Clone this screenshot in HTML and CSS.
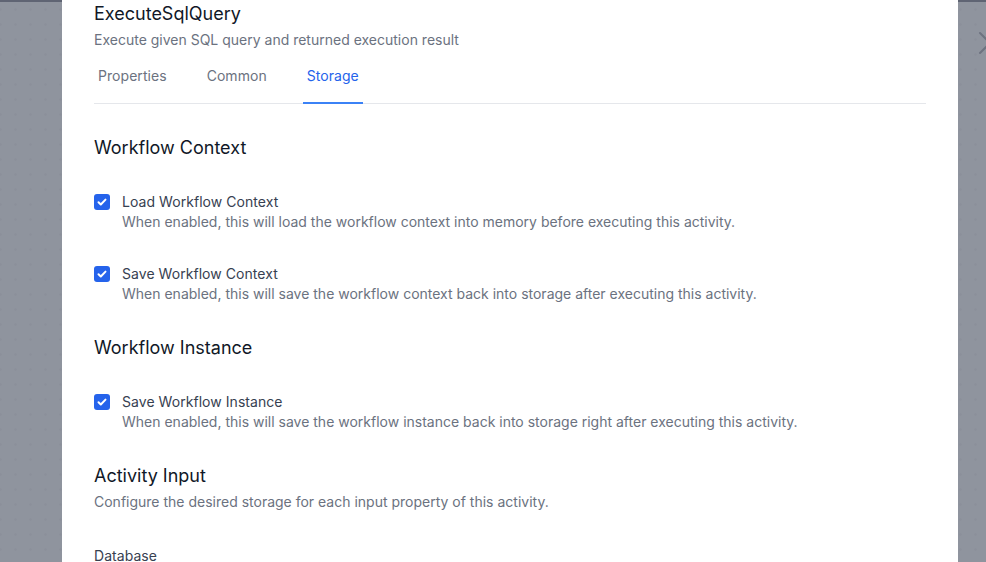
FILE: index.html
```html
<!DOCTYPE html>
<html lang="en">
<head>
    <meta charset="UTF-8">
    <meta name="viewport" content="width=device-width, initial-scale=1.0">
    <title>ExecuteSqlQuery - Storage</title>
    <link rel="stylesheet" href="styles.css">
</head>
<body>
    <div class="backdrop">
        <div class="toolbar-edge"></div>

        <div class="panel">
            <h2 class="panel-title">ExecuteSqlQuery</h2>
            <p class="panel-desc">Execute given SQL query and returned execution result</p>

            <nav class="tabs">
                <a href="#" class="tab">Properties</a>
                <a href="#" class="tab">Common</a>
                <a href="#" class="tab tab-active">Storage</a>
            </nav>

            <div class="content">
                <section class="section">
                    <h3 class="section-title">Workflow Context</h3>

                    <div class="option">
                        <span class="checkbox">
                            <svg viewBox="0 0 16 16" width="16" height="16"><path d="M4.5 8.2l2.3 2.3 4.7-4.9" fill="none" stroke="#fff" stroke-width="2" stroke-linecap="round" stroke-linejoin="round"/></svg>
                        </span>
                        <div class="option-text">
                            <div class="option-label">Load Workflow Context</div>
                            <div class="option-hint">When enabled, this will load the workflow context into memory before executing this activity.</div>
                        </div>
                    </div>

                    <div class="option">
                        <span class="checkbox">
                            <svg viewBox="0 0 16 16" width="16" height="16"><path d="M4.5 8.2l2.3 2.3 4.7-4.9" fill="none" stroke="#fff" stroke-width="2" stroke-linecap="round" stroke-linejoin="round"/></svg>
                        </span>
                        <div class="option-text">
                            <div class="option-label">Save Workflow Context</div>
                            <div class="option-hint">When enabled, this will save the workflow context back into storage after executing this activity.</div>
                        </div>
                    </div>
                </section>

                <section class="section">
                    <h3 class="section-title">Workflow Instance</h3>

                    <div class="option">
                        <span class="checkbox">
                            <svg viewBox="0 0 16 16" width="16" height="16"><path d="M4.5 8.2l2.3 2.3 4.7-4.9" fill="none" stroke="#fff" stroke-width="2" stroke-linecap="round" stroke-linejoin="round"/></svg>
                        </span>
                        <div class="option-text">
                            <div class="option-label">Save Workflow Instance</div>
                            <div class="option-hint">When enabled, this will save the workflow instance back into storage right after executing this activity.</div>
                        </div>
                    </div>
                </section>

                <section class="section">
                    <h3 class="section-title">Activity Input</h3>
                    <p class="section-desc">Configure the desired storage for each input property of this activity.</p>

                    <div class="field-label">Database</div>
                </section>
            </div>
        </div>

        <button class="close-btn" aria-label="Close">
            <svg viewBox="0 0 24 24" width="24" height="24"><path d="M2 2L22 22M2 22L22 2" fill="none" stroke="currentColor" stroke-width="2" stroke-linecap="round"/></svg>
        </button>
    </div>
</body>
</html>
```

FILE: styles.css
```css
html, body {
    margin: 0;
    padding: 0;
    height: 100%;
    overflow: hidden;
}
body {
    font-family: Inter, "Noto Sans", sans-serif;
    color: #111827;
}
.backdrop {
    position: relative;
    height: 100%;
    background-color: #8f949e;
    background-image: radial-gradient(circle, rgba(70, 76, 90, 0.05) 1px, transparent 1.6px);
    background-size: 15px 15px;
    background-position: -7px 2px;
}
.toolbar-edge {
    position: absolute;
    top: 0;
    left: 0;
    right: 0;
    height: 2px;
    background: #5f6473;
}
.panel {
    position: relative;
    margin-left: 62px;
    width: 896px;
    height: 100%;
    box-sizing: border-box;
    padding: 0 32px;
    background: #fff;
}
.panel-title {
    margin: 0;
    font-size: 18px;
    line-height: 28px;
    font-weight: 400;
    color: #111827;
}
.panel-desc {
    margin: 2px 0 0;
    font-size: 14px;
    line-height: 20px;
    color: #6b7280;
}
.tabs {
    display: flex;
    gap: 32px;
    border-bottom: 1px solid #e5e7eb;
}
.tab {
    padding: 16px 4px;
    margin-bottom: -1px;
    border-bottom: 2px solid transparent;
    font-size: 14px;
    line-height: 20px;
    font-weight: 400;
    letter-spacing: 0.05px;
    color: #6b7280;
    text-decoration: none;
}
.tab-active {
    border-bottom-color: #3b82f6;
    color: #2563eb;
}
.content {
    padding-top: 32px;
}
.section + .section {
    margin-top: 32px;
}
.section-title {
    margin: 0;
    font-size: 18px;
    line-height: 24px;
    font-weight: 400;
    color: #111827;
}
.section-desc {
    margin: 4px 0 0;
    font-size: 14px;
    line-height: 20px;
    color: #6b7280;
}
.option {
    display: flex;
    align-items: flex-start;
    margin-top: 32px;
}
.checkbox {
    display: flex;
    flex-shrink: 0;
    width: 16px;
    height: 16px;
    margin-top: 2px;
    border-radius: 3px;
    background: #2563eb;
}
.option-text {
    margin-left: 12px;
    font-size: 14px;
    line-height: 20px;
}
.option-label {
    font-weight: 400;
    letter-spacing: 0.05px;
    color: #374151;
}
.option-hint {
    color: #6b7280;
}
.field-label {
    margin-top: 34px;
    font-size: 14px;
    line-height: 20px;
    font-weight: 400;
    letter-spacing: 0.05px;
    color: #374151;
}
.close-btn {
    position: absolute;
    left: 978px;
    top: 31px;
    padding: 0;
    border: none;
    background: none;
    color: #6e7380;
}
.close-btn svg {
    display: block;
}
```
